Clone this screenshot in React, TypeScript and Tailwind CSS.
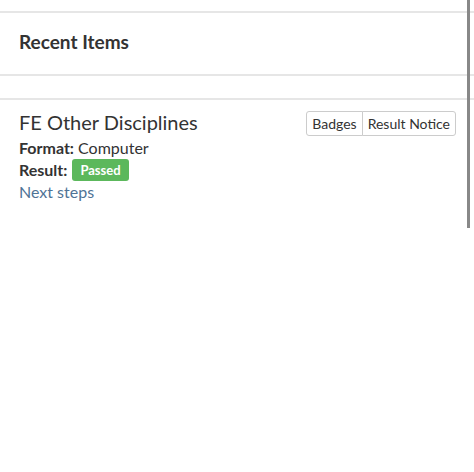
import React from "react";

const font = { fontFamily: "Lato, 'Open Sans', sans-serif" };

const ItemRow = () => {
    return (
        <div className="flex justify-between pl-[19px] pr-[18px] pt-[8px]">
            <div className="flex flex-col">
                <h3 className="text-[20px] leading-[28px] text-[#333]">FE Other Disciplines</h3>
                <div className="text-[16px] leading-[22px] text-[#333] mt-[1px]">
                    <span className="font-bold">Format:</span> Computer
                </div>
                <div className="flex items-center text-[16px] leading-[22px] text-[#333]">
                    <span className="font-bold">Result:</span>
                    <span className="ml-[5px] inline-block rounded-[3px] bg-[#5cb85c] px-[8px] text-[13px] font-bold leading-[22px] text-white">Passed</span>
                </div>
                <a className="text-[16px] leading-[22px] text-[#4f7396]" href="#">Next steps</a>
            </div>
            <div className="flex h-[25px] mt-[3px] text-[14px] text-[#333]">
                <button className="rounded-l-[3px] border border-[#ccc] bg-white px-[5px] leading-[23px]">Badges</button>
                <button className="-ml-px rounded-r-[3px] border border-[#ccc] bg-white px-[5px] leading-[23px]">Result Notice</button>
            </div>
        </div>
    )
}

export default function App() {
    return (
        <div className="relative h-[472px] w-[474px] overflow-hidden bg-white" style={font}>
            <div className="h-[11px]"></div>
            <div className="border-t-2 border-[#e6e6e6]">
                <h2 className="pl-[19px] pt-[19px] pb-[22px] text-[19px] font-bold leading-[20px] text-[#333]">Recent Items</h2>
            </div>
            <div className="h-[24px] border-t-2 border-[#e6e6e6]"></div>
            <div className="border-t-2 border-[#e6e6e6]">
                <ItemRow />
            </div>
            <div className="absolute right-[4px] top-0 h-[228px] w-[3px] bg-[#888]"></div>
        </div>
    )
}
